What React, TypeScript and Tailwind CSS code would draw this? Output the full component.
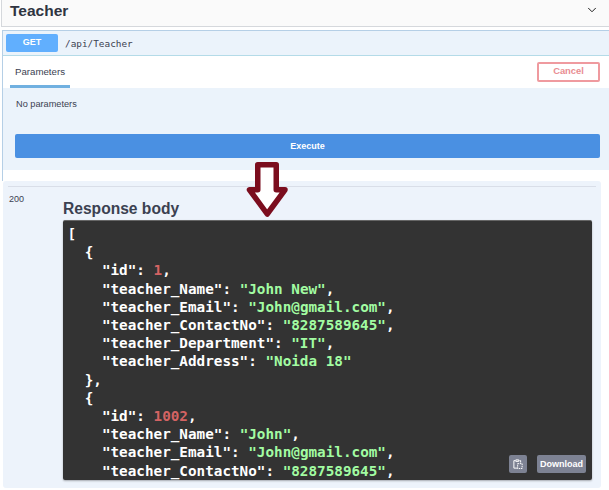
import { ChevronDown } from "lucide-react";

const Key = ({ children }: { children: string }) => <span className="text-white">{children}</span>;
const Str = ({ children }: { children: string }) => <span className="text-[#a2fca2]">{children}</span>;
const Num = ({ children }: { children: string }) => <span className="text-[#d36363]">{children}</span>;

function Field({ name, value, last }: { name: string; value: string; last?: boolean }) {
  return (
    <div className="pl-[34.4px]">
      <Key>{`"${name}"`}</Key>
      <Key>: </Key>
      <Str>{`"${value}"`}</Str>
      {!last && <Key>,</Key>}
    </div>
  );
}

export default function App() {
  return (
    <div className="relative h-[490px] w-[609px] overflow-hidden bg-white font-['Liberation_Sans',Arial,sans-serif]">
      {/* tag header */}
      <div className="ml-px flex h-[27px] items-start justify-between border-b border-l border-[#d5d8dc] bg-[#fafafa] pt-[3px] pr-[10px] pl-[8px]">
        <h2 className="text-[15.5px] leading-[15px] font-bold text-[#2f3441]">Teacher</h2>
        <ChevronDown className="h-[14px] w-[14px] text-black" strokeWidth={1.5} />
      </div>

      {/* operation */}
      <div className="mt-[3px] ml-[2px] border-t border-l border-[#b5cfe6] pb-[11px]">
        <div className="flex h-[25px] items-center border-b border-[#b4dbe8] bg-[#ebf3fb] pl-[3px]">
          <div className="flex h-[18px] w-[52px] items-center justify-center rounded-[2px] bg-[#61affe] text-[9px] font-bold text-white">
            GET
          </div>
          <span className="ml-[7px] pt-[2px] font-['DejaVu_Sans_Mono',monospace] text-[9.4px] text-[#3b4151]">/api/Teacher</span>
        </div>

        <div className="flex h-[32px] items-center justify-between bg-white pr-[9px] pl-[7px]">
          <div className="flex h-full w-[60px] items-center justify-center border-b-[3px] border-[#70b0e0] pt-[3px] text-[9.7px] text-[#3b4151]">
            Parameters
          </div>
          <button className="mb-[1px] h-[20px] w-[63px] rounded-[2px] border-2 border-[#ef9a9f] text-[9.4px] font-bold text-[#e98d92]">
            Cancel
          </button>
        </div>

        <div className="h-[82px] bg-[#ebf3fb] px-[12px] pt-[11px]">
          <p className="pl-px text-[9.2px] leading-[11px] text-[#3b4151]">No parameters</p>
          <button className="mt-[24px] h-[24px] w-[585px] rounded-[2px] bg-[#4a90e2] pt-[2px] text-[9px] font-bold text-white">
            Execute
          </button>
        </div>
      </div>

      {/* response */}
      <div className="ml-[3px] h-[307px] w-[598px] rounded-[3px] bg-[#edf3fb] pt-[5px]">
        <div className="mx-[5px] border-t border-[#d9dee8] pt-[7px]">
          <div className="flex">
            <div className="w-[55px] pl-px text-[9px] leading-[11px] text-[#3b4151]">200</div>
            <div>
              <h4 className="mt-[5px] text-[15.6px] leading-[19px] font-bold text-[#3b4151]">Response body</h4>
              <div className="relative mt-[2px] h-[260px] w-[529px] overflow-hidden rounded-[2px] border-t border-[#666] bg-[#333] pt-[4px] pl-[4.5px] font-['DejaVu_Sans_Mono',monospace] text-[14.3px] leading-[18.2px] font-bold whitespace-pre shadow-[0_1px_2px_rgba(0,0,0,0.3)]">
                <div className="text-white">[</div>
                <div className="pl-[17.2px] text-white">{"{"}</div>
                <div className="pl-[34.4px]">
                  <Key>{'"id": '}</Key>
                  <Num>1</Num>
                  <Key>,</Key>
                </div>
                <Field name="teacher_Name" value="John New" />
                <Field name="teacher_Email" value="John@gmail.com" />
                <Field name="teacher_ContactNo" value="8287589645" />
                <Field name="teacher_Department" value="IT" />
                <Field name="teacher_Address" value="Noida 18" last />
                <div className="pl-[17.2px] text-white">{"},"}</div>
                <div className="pl-[17.2px] text-white">{"{"}</div>
                <div className="pl-[34.4px]">
                  <Key>{'"id": '}</Key>
                  <Num>1002</Num>
                  <Key>,</Key>
                </div>
                <Field name="teacher_Name" value="John" />
                <Field name="teacher_Email" value="John@gmail.com" />
                <Field name="teacher_ContactNo" value="8287589645" />

                <div className="absolute right-[6px] bottom-[7px] flex gap-[10px] font-['Liberation_Sans',Arial,sans-serif]">
                  <div className="flex h-[18px] w-[18px] items-center justify-center rounded-[2px] bg-[#7d8293]">
                    <svg viewBox="0 0 16 16" className="h-[12px] w-[12px]" fill="none" stroke="white" strokeWidth="1.3">
                      <path d="M4 3.5H2.5v10h5M10 3.5h1.5V6" />
                      <path d="M5 2.5h4v2H5z" />
                      <path d="M7.5 7.5h6v6.5h-6z" strokeDasharray="2 1" />
                    </svg>
                  </div>
                  <div className="flex h-[18px] w-[49px] items-center justify-center rounded-[2px] bg-[#7d8293] text-[9px] leading-none font-bold text-white">
                    Download
                  </div>
                </div>
              </div>
            </div>
          </div>
        </div>
      </div>

      {/* annotation arrow drawn over the screenshot */}
      <svg className="absolute top-[160px] left-[244px] h-[60px] w-[46px]" viewBox="0 0 46 60" fill="none">
        <path
          d="M13.75 4.75H32.25V29.8H41L23.2 54L5.5 29.8H13.75Z"
          stroke="#7b0d1e"
          strokeWidth="5.5"
          strokeLinejoin="round"
          fill="white"
        />
      </svg>
    </div>
  );
}
